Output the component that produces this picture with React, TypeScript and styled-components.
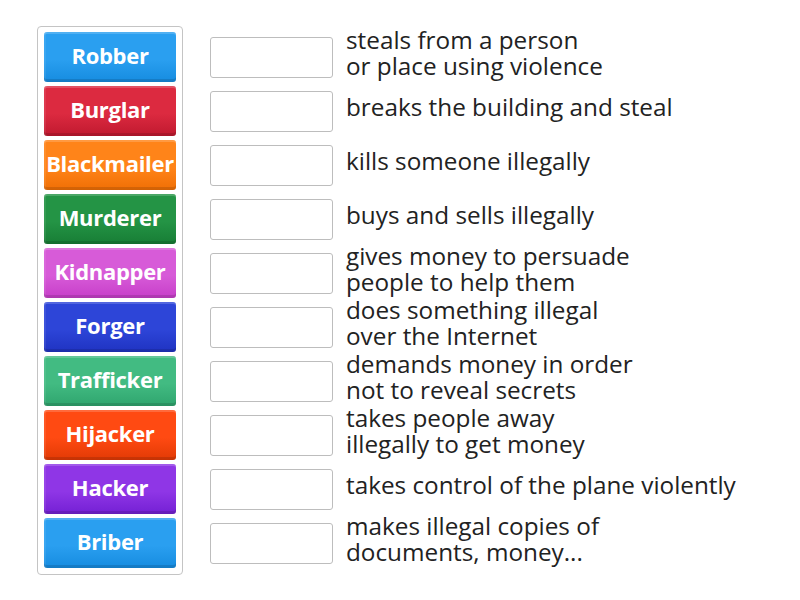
import styled, { createGlobalStyle } from "styled-components"

const Global = createGlobalStyle`
  body {
    margin: 0;
    background: #fff;
    font-family: "Open Sans", "Liberation Sans", sans-serif;
  }
`

const Page = styled.div`
  display: flex;
  align-items: flex-start;
  gap: 27px;
  padding: 26px 0 0 37px;
`

const Panel = styled.div`
  display: flex;
  flex-direction: column;
  gap: 4px;
  padding: 5px 6px 6px 6px;
  border: 1px solid #c4c4c4;
  border-radius: 4px;
`

const Tile = styled.div<{ $bg: string; $dark: string }>`
  width: 132px;
  height: 50px;
  box-sizing: border-box;
  display: flex;
  align-items: center;
  justify-content: center;
  padding-bottom: 5px;
  border-radius: 3px;
  background: linear-gradient(${p => p.$bg}, ${p => p.$bg} 55%, ${p => p.$dark});
  box-shadow: inset 0 2px 0 rgba(255, 255, 255, 0.18), inset 0 -3px 0 rgba(0, 0, 0, 0.12),
    inset 2px 0 0 rgba(255, 255, 255, 0.08);
  color: #fff;
  font-weight: 700;
  font-size: 22px;
  letter-spacing: -0.3px;
  white-space: nowrap;
`

const Column = styled.div`
  display: flex;
  flex-direction: column;
  gap: 4px;
  padding-top: 6px;
`

const Row = styled.div`
  height: 50px;
  display: flex;
  align-items: center;
  gap: 13px;
`

const Slot = styled.div`
  width: 123px;
  height: 41px;
  box-sizing: border-box;
  border: 1px solid #bdbdbd;
  border-radius: 3px;
  flex-shrink: 0;
`

const Clue = styled.div`
  font-size: 24.3px;
  line-height: 26.5px;
  margin-top: -8px;
  color: #222;
  white-space: pre-line;
`

const tiles = [
  { t: "Robber", bg: "#2a9ff0", dark: "#168ce0" },
  { t: "Burglar", bg: "#dc2a40", dark: "#c0192f" },
  { t: "Blackmailer", bg: "#ff8419", dark: "#f06f05" },
  { t: "Murderer", bg: "#249445", dark: "#177d35" },
  { t: "Kidnapper", bg: "#d75bd8", dark: "#c73ec9" },
  { t: "Forger", bg: "#2d45d8", dark: "#1f33c2" },
  { t: "Trafficker", bg: "#42bb82", dark: "#2fa56e" },
  { t: "Hijacker", bg: "#ff4a12", dark: "#e23a05" },
  { t: "Hacker", bg: "#8f36e6", dark: "#7420d4" },
  { t: "Briber", bg: "#2a9ff0", dark: "#168ce0" },
]

const clues = [
  "steals from a person\nor place using violence",
  "breaks the building and steal",
  "kills someone illegally",
  "buys and sells illegally",
  "gives money to persuade\npeople to help them",
  "does something illegal\nover the Internet",
  "demands money in order\nnot to reveal secrets",
  "takes people away\nillegally to get money",
  "takes control of the plane violently",
  "makes illegal copies of\ndocuments, money...",
]

export default function App() {
  return (
    <>
      <Global />
      <Page>
        <Panel>
          {tiles.map(x => (
            <Tile key={x.t} $bg={x.bg} $dark={x.dark}>{x.t}</Tile>
          ))}
        </Panel>
        <Column>
          {clues.map(c => (
            <Row key={c}>
              <Slot />
              <Clue>{c}</Clue>
            </Row>
          ))}
        </Column>
      </Page>
    </>
  )
}
